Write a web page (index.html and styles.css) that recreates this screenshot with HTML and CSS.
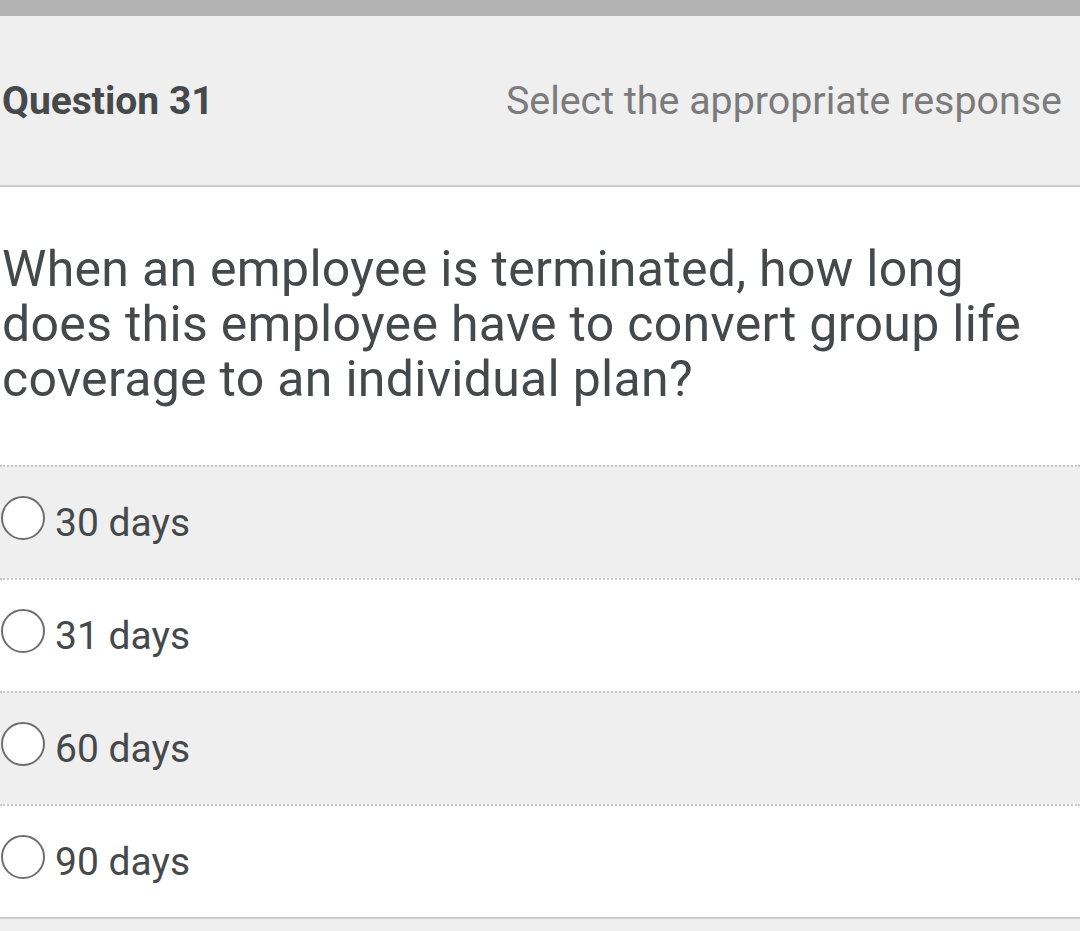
FILE: index.html
```html
<!DOCTYPE html>
<html lang="en">
<head>
    <meta charset="UTF-8">
    <meta name="viewport" content="width=device-width, initial-scale=1.0">
    <title>Question 31</title>
    <link rel="stylesheet" href="styles.css">
</head>
<body>
    <div class="topbar"></div>
    <div class="header">
        <h1 class="q-number">Question 31</h1>
        <span class="q-hint">Select the appropriate response</span>
    </div>
    <div class="question">
        When an employee is terminated, how long does this employee have to convert group life coverage to an individual plan?
    </div>
    <div class="options">
        <label class="option shaded"><span class="radio"></span><span class="option-text">30 days</span></label>
        <label class="option"><span class="radio"></span><span class="option-text">31 days</span></label>
        <label class="option shaded"><span class="radio"></span><span class="option-text">60 days</span></label>
        <label class="option last"><span class="radio"></span><span class="option-text">90 days</span></label>
    </div>
</body>
</html>
```

FILE: styles.css
```css
body {
    margin: 0;
    background-color: #efefef;
    font-family: Roboto, "Noto Sans", Arial, sans-serif;
    color: #46494c;
}
.topbar {
    height: 16px;
    background-color: #b3b3b3;
}
.header {
    height: 169px;
    display: flex;
    align-items: center;
    justify-content: space-between;
    padding: 0 18px 0 2px;
    background-color: #efefef;
    border-bottom: 2px solid #cbcfce;
}
.q-number {
    margin: 0;
    font-size: 39px;
    font-weight: 700;
}
.q-hint {
    font-size: 39.4px;
    color: #7b7b7b;
}
.question {
    background-color: #fff;
    padding: 55px 30px 58px 2px;
    font-size: 50px;
    letter-spacing: 0.3px;
    line-height: 55px;
}
.options {
    display: flex;
    flex-direction: column;
}
.option {
    height: 111px;
    display: flex;
    align-items: center;
    gap: 10px;
    padding-left: 1px;
    background-color: #fff;
    border-top: 2px dotted #c8c8c8;
}
.option.shaded {
    background-color: #efefef;
}
.option.last {
    border-bottom: 2px solid #cbcfce;
}
.radio {
    width: 40px;
    height: 40px;
    border: 2px solid #6e6e6e;
    border-radius: 50%;
    background-color: #fff;
    margin-bottom: 10px;
}
.option-text {
    font-size: 39px;
}
```
